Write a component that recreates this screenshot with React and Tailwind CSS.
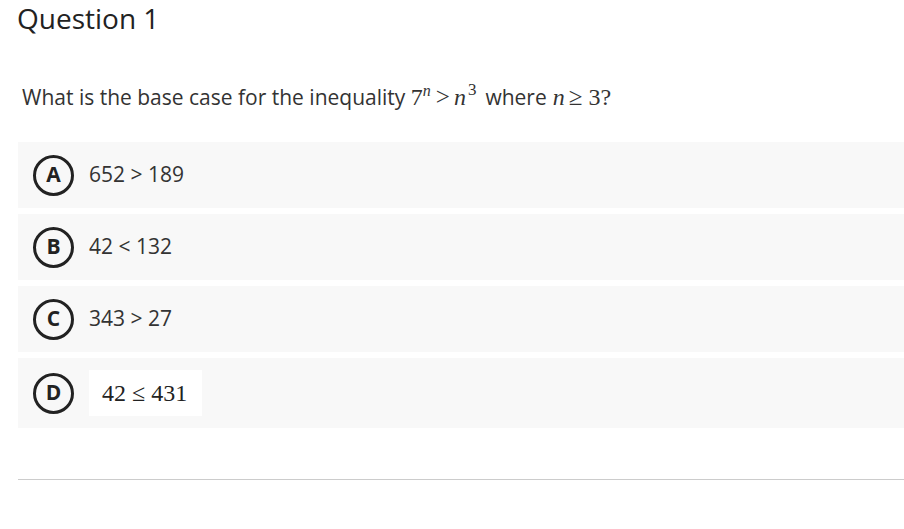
const sans = { fontFamily: '"Open Sans", "Noto Sans", sans-serif' };

const options = [
  { letter: "A", text: "652 > 189" },
  { letter: "B", text: "42 < 132" },
  { letter: "C", text: "343 > 27" },
];

function Letter({ children }) {
  return (
    <div className="w-[41px] h-[41px] rounded-full border-[3px] border-[#222] flex items-center justify-center text-[21px] font-bold text-[#222] shrink-0">
      {children}
    </div>
  );
}

export default function App() {
  return (
    <div className="w-[904px] h-[529px] bg-white text-[#333] overflow-hidden" style={sans}>
      <h1 className="pl-[17px] pt-0 text-[28px] leading-[36px] text-[#222]">Question 1</h1>

      <p className="pl-[22px] mt-[46px] text-[21px] leading-[30px] text-[#333]">
        What is the base case for the inequality{" "}
        <span className="font-['Liberation_Serif',serif] text-[24px] leading-none">
          7<sup className="italic text-[16px] -top-[9px]">n</sup>
          <span className="ml-[5px] mr-[4px] text-[25px]">&gt;</span>
          <span className="italic">n</span>
          <sup className="text-[17px] -top-[10px] ml-[2px]">3</sup>
        </span>
        <span className="ml-[9px]">where</span>
        <span className="ml-[6px] font-['Liberation_Serif',serif] text-[24px] leading-none">
          <span className="italic">n</span>
          <span className="ml-[4px] mr-[6px] text-[25px]">≥</span>
          3?
        </span>
      </p>

      <div className="mt-[30px] ml-[18px] flex flex-col gap-[6px]">
        {options.map((o) => (
          <div key={o.letter} className="h-[66px] bg-[#f8f8f8] flex items-center pl-[15px] gap-[15px]">
            <Letter>{o.letter}</Letter>
            <span className="text-[21px] text-[#333]">{o.text}</span>
          </div>
        ))}
        <div className="h-[70px] bg-[#f8f8f8] flex items-center pl-[15px] gap-[15px]">
          <Letter>D</Letter>
          <span className="h-[46px] w-[113px] bg-white flex items-center pl-[13px] font-['Liberation_Serif',serif] text-[24px] text-[#222]">
            42 ≤ 431
          </span>
        </div>
      </div>

      <div className="ml-[18px] mt-[51px] h-px bg-[#ccc]" />
    </div>
  );
}
